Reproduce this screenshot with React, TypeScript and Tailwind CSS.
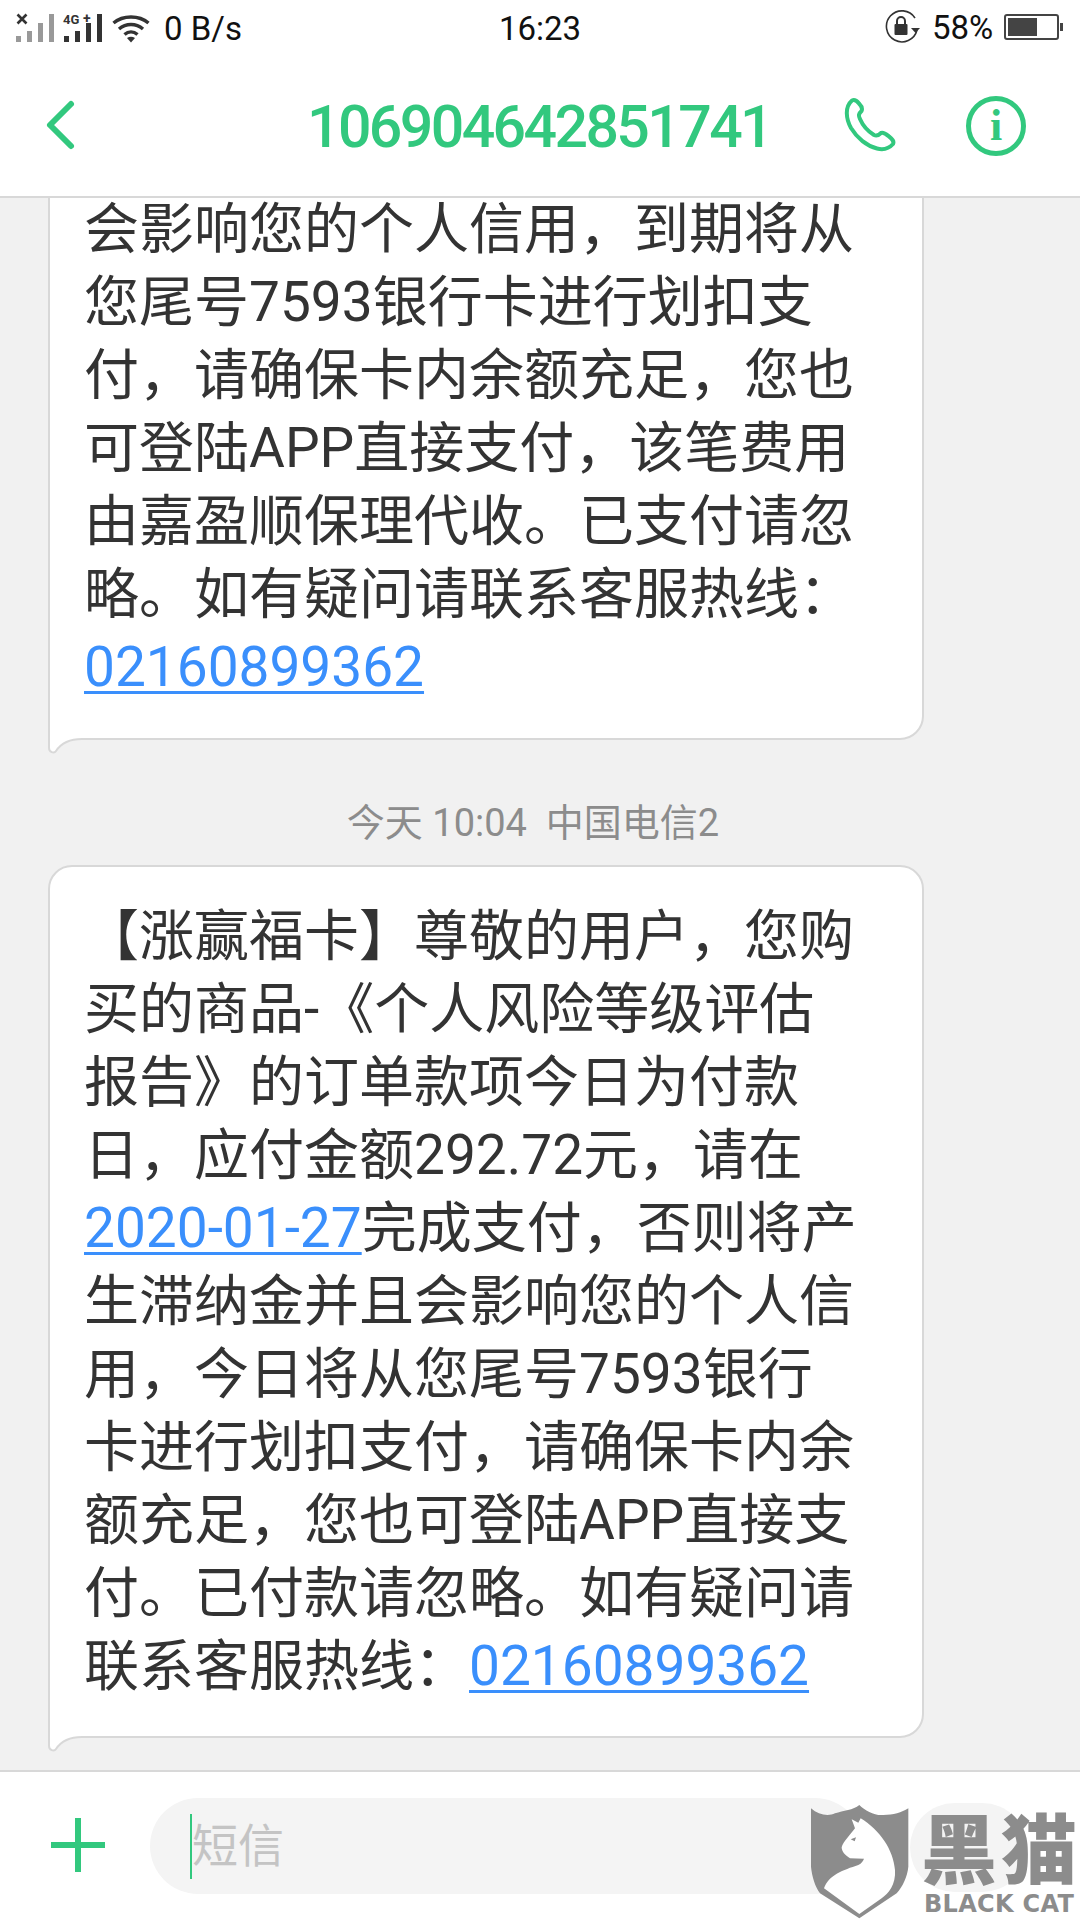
import React from 'react';

const font = { fontFamily: 'Roboto, "Noto Sans CJK SC", sans-serif' };

const Link: React.FC<{ children: React.ReactNode }> = ({ children }) => (
  <span className="text-[#3a8ffc] underline decoration-[3px] underline-offset-[5px]">{children}</span>
);

const Bubble: React.FC<{ lines: React.ReactNode[]; className?: string }> = ({ lines, className }) => (
  <div className={`relative shrink-0 ml-[48px] w-[876px] bg-white border-2 border-[#d8d8d8] rounded-[24px] rounded-bl-none pl-[34px] ${className ?? ''}`}>
    {lines.map((l, i) => (
      <div key={i} className="h-[73px] leading-[73px] text-[55px] text-[#333333] whitespace-pre">{l}</div>
    ))}
    <svg className="absolute left-[-2px] bottom-[-16px]" width="44" height="20" viewBox="0 0 44 20">
      <path d="M1 0 V14 C1 18 6 20 8 17 C14 8 22 5 34 5 H44 V0 Z" fill="#ffffff" />
      <path d="M1 0 V14 C1 18 6 20 8 17 C14 8 22 5 34 5 H44" fill="none" stroke="#d8d8d8" strokeWidth="2" />
    </svg>
  </div>
);

const Signal: React.FC<{ color: string }> = ({ color }) => (
  <div className="flex items-end gap-[6px] h-[28px]">
    {[6, 11, 19, 28].map((h, i) => (
      <div key={i} className="w-[5px]" style={{ height: h, backgroundColor: color }} />
    ))}
  </div>
);

export default function App() {
  return (
    <div className="w-[1080px] h-[1920px] flex flex-col bg-[#f1f1f1] overflow-hidden" style={font}>
      {/* status bar */}
      <div className="h-[66px] bg-white shrink-0 relative flex items-center justify-center">
        <div className="absolute left-[16px] top-[12px] flex items-end h-[30px]">
          <div className="relative mr-[5px]">
            <svg className="absolute left-0 top-[-1px]" width="12" height="12" viewBox="0 0 12 12">
              <path d="M1.5 1.5 L10.5 10.5 M10.5 1.5 L1.5 10.5" stroke="#333" strokeWidth="2.6" />
            </svg>
            <Signal color="#999999" />
          </div>
          <div className="relative ml-[5px]">
            <span className="absolute left-[-1px] top-[-1px] text-[13px] leading-[13px] font-bold text-[#333]">4G</span>
            <span className="absolute left-[19px] top-[-3px] text-[14px] leading-[14px] font-bold text-[#333]">+</span>
            <Signal color="#333333" />
          </div>
          <svg className="ml-[10px] mb-[-1px]" width="38" height="28" viewBox="0 0 38 28">
            <path d="M1.5 8 C11 0 27 0 36.5 8 M7 14 C14 8 24 8 31 14 M12.5 19.5 C16.5 16 21.5 16 25.5 19.5" fill="none" stroke="#333" strokeWidth="3.4" />
            <path d="M15 23 Q19 20.5 23 23 L19 27.5 Z" fill="#333" />
          </svg>
          <span className="ml-[14px] text-[33px] leading-[33px] text-[#111] mb-[-3px] whitespace-pre">0 B/s</span>
        </div>
        <span className="text-[33px] text-[#111] mt-[-8px]">16:23</span>
        <div className="absolute left-[885px] top-[10px] flex items-center">
          <svg width="36" height="34" viewBox="0 0 36 34">
            <path d="M32 20 A15.5 15.5 0 1 1 30 8" fill="none" stroke="#333" strokeWidth="1.6" />
            <path d="M26 18 L35 18 L30.5 23 Z" fill="#333" />
            <rect x="9.5" y="14" width="13" height="11" rx="1" fill="#333" />
            <path d="M12 14 V11 a4 4 0 0 1 8 0 V14" fill="none" stroke="#333" strokeWidth="2" />
          </svg>
          <span className="ml-[11px] text-[33px] leading-[33px] text-[#111] whitespace-pre">58%</span>
          <div className="ml-[11px] w-[55px] h-[26px] border-2 border-[#444] rounded-[3px] p-[2px]">
            <div className="w-[29px] h-full bg-[#444]" />
          </div>
          <div className="w-[3px] h-[8px] bg-[#444] ml-[1px]" />
        </div>
      </div>

      {/* header */}
      <div className="h-[132px] bg-white border-b-2 border-[#d8d8d8] shrink-0 relative flex items-center justify-center">
        <svg className="absolute left-[44px] top-[33px]" width="34" height="54" viewBox="0 0 34 54">
          <path d="M27 6 L6 27 L27 48" transform="translate(0 -1)" fill="none" stroke="#32c87e" strokeWidth="6" strokeLinecap="round" strokeLinejoin="round" />
        </svg>
        <span className="text-[59px] leading-[60px] tracking-[-2.6px] font-medium text-[#32c87e] mt-[-8px] ml-[-2px]">106904642851741</span>
        <svg className="absolute left-[843px] top-[32px]" width="56" height="58" viewBox="0 0 56 58">
          <path d="M9 2.5 C12 1 14 3 16 5.5 C18.5 8 20 10 18.5 13 C16 15.5 15 17 17 21 C20 28 24.5 33 31 37 C34 38.5 36 37 38 35 C41 34 43 36 46 38.5 C49 41 51.5 43 50 46 C46 50.5 40 52 34 50.5 C24 48 14 40 8 30 C3 21 1.5 9 9 2.5 Z" fill="none" stroke="#32c87e" strokeWidth="4" strokeLinejoin="round" />
        </svg>
        <div className="absolute left-[966px] top-[30px] w-[60px] h-[60px] rounded-full border-[5px] border-[#32c87e] flex items-center justify-center">
          <span className="text-[44px] leading-none font-bold text-[#32c87e]" style={{ fontFamily: '"Liberation Serif", serif' }}>i</span>
        </div>
      </div>

      {/* messages, clipped from the top */}
      <div className="flex-1 min-h-0 overflow-hidden flex flex-col justify-end pb-[32px]">
        <Bubble
          lines={[
            '会影响您的个人信用，到期将从',
            '您尾号7593银行卡进行划扣支',
            '付，请确保卡内余额充足，您也',
            '可登陆APP直接支付，该笔费用',
            '由嘉盈顺保理代收。已支付请忽',
            '略。如有疑问请联系客服热线：',
            <Link>02160899362</Link>,
          ]}
          className="pt-[30px] pb-[34px]"
        />
        <div className="h-[125px] shrink-0 pt-[42px] pr-[14px] flex items-center justify-center text-[38px] text-[#8c8c8c] whitespace-pre">今天 10:04  中国电信2</div>
        <Bubble
          lines={[
            '【涨赢福卡】尊敬的用户，您购',
            '买的商品-《个人风险等级评估',
            '报告》的订单款项今日为付款',
            '日，应付金额292.72元，请在',
            <><Link>2020-01-27</Link>完成支付，否则将产</>,
            '生滞纳金并且会影响您的个人信',
            '用，今日将从您尾号7593银行',
            '卡进行划扣支付，请确保卡内余',
            '额充足，您也可登陆APP直接支',
            '付。已付款请忽略。如有疑问请',
            <>联系客服热线：<Link>02160899362</Link></>,
          ]}
          className="pt-[33px] pb-[33px]"
        />
      </div>

      {/* input bar */}
      <div className="h-[150px] bg-white border-t-2 border-[#d8d8d8] shrink-0 relative flex items-center">
        <div className="relative w-[54px] h-[54px] ml-[51px] mt-[-2px] shrink-0">
          <div className="absolute left-0 right-0 top-[24px] h-[6px] bg-[#32c87e]" />
          <div className="absolute top-0 bottom-0 left-[24px] w-[6px] bg-[#32c87e]" />
        </div>
        <div className="ml-[45px] w-[713px] h-[96px] rounded-[48px] bg-[#f4f4f4] flex items-center pl-[40px]">
          <div className="w-[2px] h-[65px] bg-[#32c87e]" />
          <span className="text-[46px] text-[#c4c4c4]">短信</span>
        </div>
        <div className="absolute left-[910px] top-[31px] w-[117px] h-[89px] rounded-[45px] bg-[#f4f4f4]" />

        {/* watermark */}
        <svg className="absolute left-[800px] top-[18px]" width="110" height="130" viewBox="0 0 330 390">
          <path d="M33 55 C55 75 85 80 105 70 C130 62 160 60 178 45 C195 62 225 78 250 75 C280 75 305 68 325 55 V230 C322 260 308 290 290 310 L178 385 L60 310 C45 290 36 260 33 230 Z" fill="#8c8c8c" />
          <path d="M155 88 L175 98 L182 85 C240 120 280 180 285 240 C288 285 265 310 245 325 L178 372 L72 295 C85 255 130 240 175 225 C185 220 190 212 192 206 L150 205 C135 195 125 185 125 172 C130 155 150 135 165 115 Z" fill="#ffffff" />
          <path d="M152 148 L168 142 L164 154 Z" fill="#8c8c8c" />
        </svg>
        <div className="absolute left-[921px] top-[32px] w-[159px] flex flex-col items-start text-[#8c8c8c]">
          <span className="text-[76px] leading-[82px] font-black tracking-[4px] whitespace-pre" style={{ fontFamily: '"Noto Sans CJK SC", sans-serif' }}>黑猫</span>
          <span className="mt-[3px] ml-[3px] text-[24px] leading-[30px] font-bold tracking-[0.3px] whitespace-pre" style={{ fontFamily: '"DejaVu Sans", sans-serif' }}>BLACK CAT</span>
        </div>
      </div>
    </div>
  );
}
